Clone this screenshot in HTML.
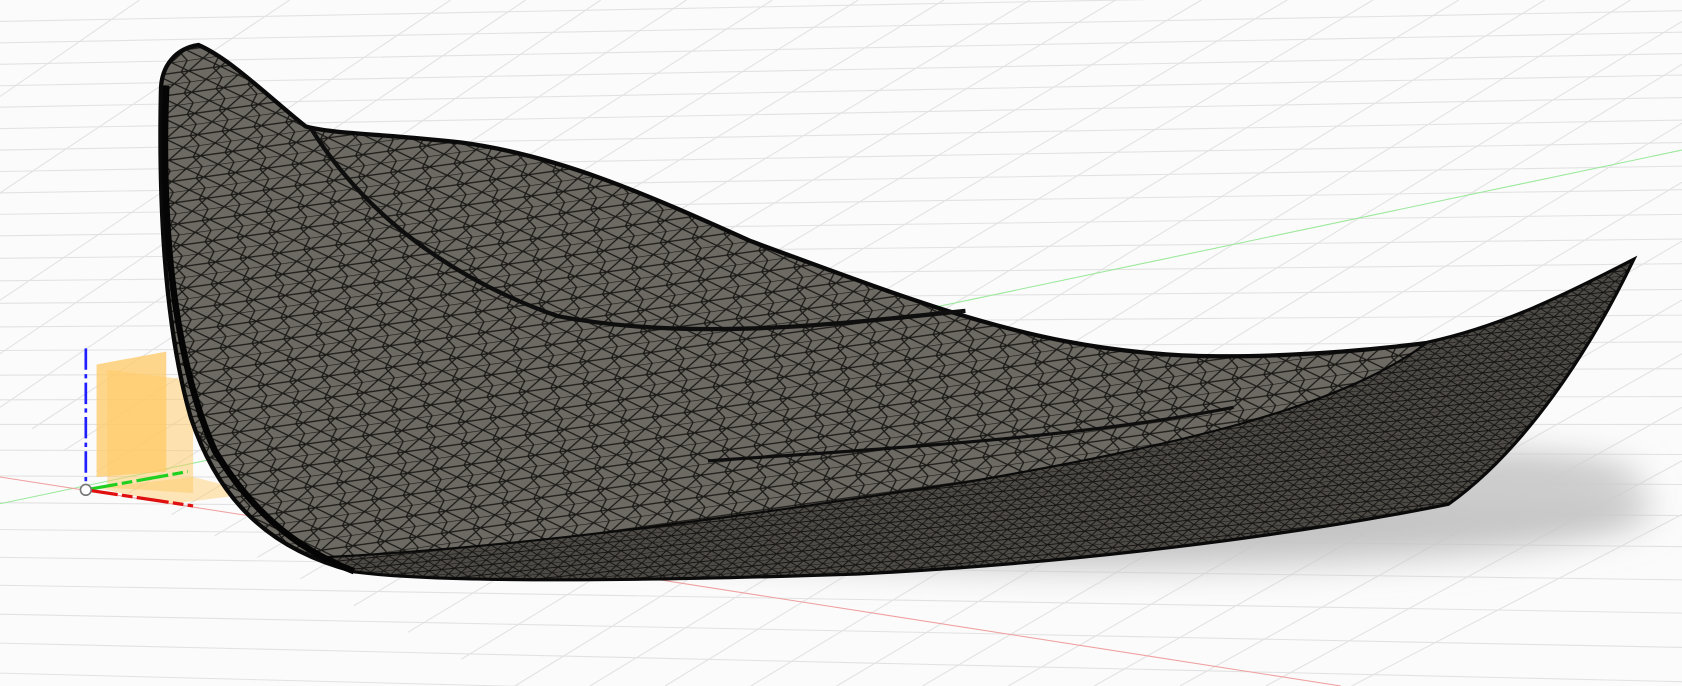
<!DOCTYPE html>
<html><head><meta charset="utf-8"><style>
html,body{margin:0;padding:0;background:#fbfbfb;overflow:hidden}
svg{display:block}
</style></head><body>
<svg width="1682" height="686" viewBox="0 0 1568 640" preserveAspectRatio="none" xmlns="http://www.w3.org/2000/svg">
<defs>
<pattern id="mesh" width="30" height="20" patternUnits="userSpaceOnUse" patternTransform="rotate(-8)">
<rect width="30" height="20" fill="#6d6a63"/>
<path d="M0 0L30 0M0 10L30 10M0 0L15 10L30 0M0 20L15 10L30 20M15 0L8 10L15 20M0 10L8 10" stroke="#1a1916" stroke-width="1.2" fill="none"/>
</pattern>
<pattern id="mesh2" width="12" height="9" patternUnits="userSpaceOnUse" patternTransform="rotate(-6)">
<rect width="12" height="9" fill="#4e4b46"/>
<path d="M0 0L12 0M0 4.5L12 4.5M0 0L6 4.5L12 0M0 9L6 4.5L12 9" stroke="#151412" stroke-width="0.9" fill="none"/>
</pattern>
<filter id="blur" x="-50%" y="-100%" width="200%" height="300%"><feGaussianBlur stdDeviation="16"/></filter>
</defs>
<rect width="1568" height="640" fill="#fbfbfb"/>
<g stroke="#e2e2e2" stroke-width="1">
<path d="M0 20L1568 -10M0 40L1568 10M0 60L1568 30M0 80L1568 50M0 100L1568 70M0 120L1568 91M0 140L1568 112M0 160L1568 133M0 180L1568 155M0 200L1568 177M0 220L1568 200M0 241L1568 223M0 262L1568 246M0 283L1568 270M0 305L1568 294M0 327L1568 319M0 350L1568 344M0 373L1568 370M0 396L1568 396M0 420L1568 424M0 444L1568 452M0 469L1568 481M0 494L1568 510M0 520L1568 541M0 546L1568 572M0 573L1568 604M0 600L1568 636M0 628L1568 668"/>
<path d="M0 380L560 0M60 420L720 0M120 460L880 0M200 500L1040 0M280 540L1200 0M380 590L1360 0M480 640L1520 0M620 640L1568 60M780 640L1568 170M940 640L1568 280M1100 640L1568 380M1260 640L1568 480M0 280L420 0M0 180L270 0M0 90L130 0M0 330L490 0M30 400L640 0M90 440L800 0M160 480L960 0M240 520L1120 0M330 565L1280 0M430 615L1440 0M550 640L1568 20M700 640L1568 115M860 640L1568 225M1020 640L1568 330M1180 640L1568 430"/>
</g>
<path d="M0 470L1568 140" stroke="#9be89b" stroke-width="1"/>
<path d="M0 445L1250 640" stroke="#f0a0a0" stroke-width="1"/>
<ellipse cx="1000" cy="475" rx="540" ry="55" fill="#c4c4c4" filter="url(#blur)"/>
<ellipse cx="1400" cy="450" rx="130" ry="28" fill="#cccccc" filter="url(#blur)"/>
<path d="M90 340L155 328L155 440L90 445Z" fill="#ffc966" opacity="0.75"/>
<path d="M100 345L180 355L180 460L100 455Z" fill="#ffc966" opacity="0.5"/>
<path d="M90 455L180 445L240 460L160 470Z" fill="#ffc966" opacity="0.45"/>
<path d="M80 325V455" stroke="#2020ff" stroke-width="2.5" stroke-dasharray="20 4 4 4"/>
<path d="M80 457L175 440" stroke="#20d020" stroke-width="3" stroke-dasharray="30 4 10 4"/>
<path d="M80 457L180 472" stroke="#e01010" stroke-width="3" stroke-dasharray="30 4 10 4"/>
<circle cx="80" cy="457" r="5" fill="#fff" stroke="#777" stroke-width="1.5"/>
<path d="M185 42C165 45 150 60 150 85C148 180 152 300 178 390C200 455 240 510 330 533C420 545 650 540 800 535C1000 525 1200 500 1350 470C1420 420 1480 330 1522 243C1460 275 1400 305 1330 320C1250 330 1150 336 1080 330C950 320 850 280 700 225C600 180 520 145 430 133C360 125 310 125 285 118C250 90 215 55 185 42Z" fill="url(#mesh)" stroke="#0a0a0a" stroke-width="4"/>
<path d="M300 520C500 510 700 480 900 450C1100 415 1250 380 1330 320C1400 305 1460 275 1522 243C1480 330 1420 420 1350 470C1200 500 1000 525 800 535C650 540 420 545 330 533Z" fill="url(#mesh2)" stroke="#0a0a0a" stroke-width="2"/>
<path d="M290 120C340 200 420 260 520 295C650 320 800 300 900 290" stroke="#0e0e0e" stroke-width="4" fill="none"/>
<path d="M660 430C800 420 1000 410 1150 380" stroke="#0e0e0e" stroke-width="3" fill="none"/>
<path d="M155 80C150 200 160 330 200 420C230 470 270 510 330 533" stroke="#050505" stroke-width="6" fill="none"/>
</svg>
</body></html>
